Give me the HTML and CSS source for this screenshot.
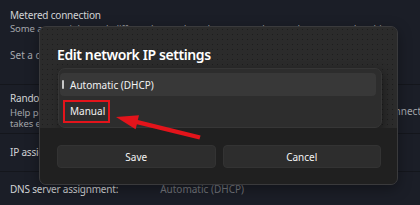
FILE: index.html
```html
<!DOCTYPE html>
<html lang="en">
<head>
<meta charset="utf-8">
<title>Edit network IP settings</title>
<link rel="stylesheet" href="styles.css">
</head>
<body>
<div class="settings">
  <div class="group-top">
    <div class="row-title">Metered connection</div>
    <div class="row-desc">Some apps might work differently to reduce data usage when you're connected to this</div>
    <div class="row-link">Set a data limit to help control data usage</div>
  </div>
  <div class="row row-random">
    <div class="row-main">
      <div class="row-title">Random hardware addresses</div>
      <div class="row-desc">Help protect your privacy by making it harder for people</div>
      <div class="row-desc">takes effect the next time you</div>
    </div>
    <div class="row-side">connect</div>
  </div>
  <div class="row row-ip">
    <div class="row-title">IP assignment:</div>
  </div>
  <div class="row row-dns">
    <div class="row-title">DNS server assignment:</div>
    <div class="row-value">Automatic (DHCP)</div>
  </div>
</div>

<div class="dialog">
  <div class="dialog-body">
    <h1 class="dialog-title">Edit network IP settings</h1>
    <div class="popup">
      <div class="item item-selected"><span class="indicator"></span><span>Automatic (DHCP)</span></div>
      <div class="item"><span class="callout-box">Manual</span></div>
    </div>
  </div>
  <div class="dialog-footer">
    <button class="btn">Save</button>
    <button class="btn">Cancel</button>
  </div>
</div>

<svg class="arrow" width="420" height="205" viewBox="0 0 420 205" aria-hidden="true">
  <polygon points="116,117 139,115.2 137.8,120.1 200.6,135.4 199.4,139.6 136.9,124.3 135.6,129.2" fill="#e3141b"/>
</svg>
</body>
</html>
```

FILE: styles.css
```css
* { box-sizing: border-box; }

html, body {
  margin: 0;
  padding: 0;
  width: 420px;
  height: 205px;
  overflow: hidden;
  background: #1b1e27;
  font-family: "Noto Sans", "Open Sans", sans-serif;
  color: #d4d4d6;
}

.settings {
  padding-left: 10px;
  font-size: 10px;
}

.row-title {
  line-height: 13px;
  color: #d2d3d6;
  white-space: nowrap;
  letter-spacing: -0.2px;
}

.row-desc {
  line-height: 11px;
  color: #a4a6ab;
  font-size: 9.5px;
  white-space: nowrap;
  letter-spacing: -0.1px;
}

.row-link {
  line-height: 13px;
  color: #a8aab0;
  white-space: nowrap;
}

.group-top {
  height: 84px;
  padding-top: 9px;
}

.group-top .row-desc { margin-top: 1px; }
.group-top .row-link { margin-top: 15px; }

.row {
  display: flex;
  border-top: 1px solid #14161c;
  margin-left: -10px;
  padding-left: 10px;
}

.row-random {
  height: 49px;
  padding-top: 7px;
}

.row-main { flex: 1; min-width: 0; }
.row-random .row-title { margin-bottom: 2px; }

.row-side {
  margin-right: -1px;
  padding-top: 14px;
  color: #a4a6ab;
  font-size: 10px;
  line-height: 11px;
}

.row-ip {
  height: 38px;
  align-items: center;
}

.row-dns {
  height: 34px;
  padding-top: 11px;
}

.row-value {
  margin-left: 42px;
  color: #74767c;
  line-height: 13px;
}

.dialog {
  position: absolute;
  left: 39px;
  top: 26px;
  width: 359px;
  height: 159px;
  border: 1px solid #3a3a3c;
  border-radius: 7px;
  overflow: hidden;
  display: flex;
  flex-direction: column;
  background: #2b2b2b;
  box-shadow: 0 4px 14px rgba(0,0,0,0.35);
}

.dialog-body {
  height: 101px;
  padding: 18px 0 0 17px;
  background-color: #2b2b2b;
  background-image: radial-gradient(rgba(0,0,0,0.32) 0.55px, transparent 0.75px);
  background-size: 5px 5px;
}

.dialog-title {
  margin: 0;
  font-size: 14px;
  font-weight: 600;
  line-height: 20px;
  letter-spacing: -0.4px;
  color: #ffffff;
}

.popup {
  margin: 3px 0 0 1px;
  width: 324px;
  height: 60px;
  padding: 4px 5px 3px 1px;
  background: #2d2d2d;
  border: 1px solid #363636;
  border-radius: 7px;
  box-shadow: 2px 3px 8px rgba(0,0,0,0.35);
  display: flex;
  flex-direction: column;
  gap: 4px;
}

.item {
  height: 23px;
  display: flex;
  align-items: center;
  padding-left: 2px;
  font-size: 10px;
  color: #f2f2f2;
  border-radius: 4px;
}

.item-selected {
  background: #383838;
  gap: 6px;
}

.indicator {
  width: 2px;
  height: 9px;
  border-radius: 1px;
  background: #c8c8c8;
}

.callout-box {
  display: inline-block;
  margin-left: 1px;
  height: 23px;
  line-height: 19px;
  padding: 0 3px 0 5px;
  border: 2px solid #e3141b;
}

.dialog-footer {
  flex: 1;
  background: #202020;
  display: grid;
  grid-template-columns: 1fr 1fr;
  gap: 7px;
  padding: 17px 16px 0 17px;
  align-items: start;
}

.btn {
  height: 23px;
  border: 1px solid #333333;
  border-radius: 4px;
  background: #2d2d2d;
  color: #f4f4f4;
  font-family: "Noto Sans", "Open Sans", sans-serif;
  font-size: 10px;
  padding: 0;
}

.arrow {
  position: absolute;
  left: 0;
  top: 0;
  pointer-events: none;
}
```
